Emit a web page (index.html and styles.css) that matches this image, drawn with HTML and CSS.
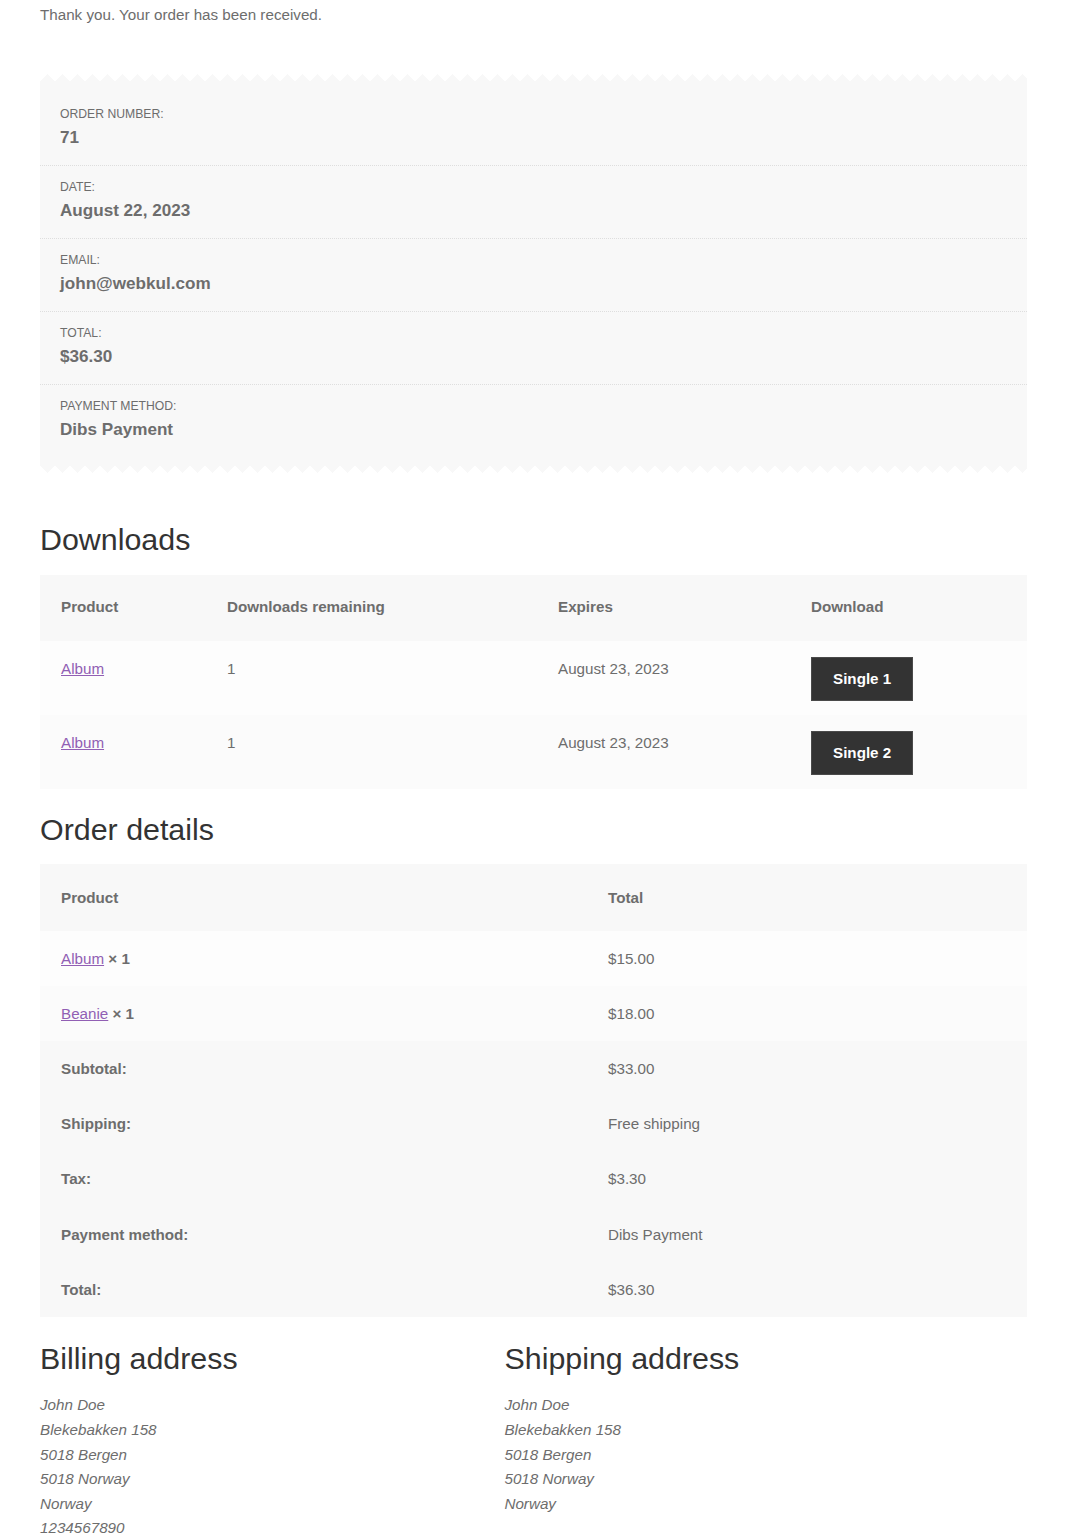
FILE: index.html
```html
<!DOCTYPE html>
<html lang="en">
<head>
<meta charset="utf-8">
<title>Order received</title>
<link rel="stylesheet" href="styles.css">
</head>
<body>
<div class="page">
  <p class="thankyou">Thank you. Your order has been received.</p>

  <div class="overview">
    <div class="zig zig-top"></div>
    <ul class="ov-body">
      <li class="ov-row"><span class="ov-label">Order number:</span><strong class="ov-value">71</strong></li>
      <li class="ov-row"><span class="ov-label">Date:</span><strong class="ov-value">August 22, 2023</strong></li>
      <li class="ov-row"><span class="ov-label">Email:</span><strong class="ov-value">john@webkul.com</strong></li>
      <li class="ov-row"><span class="ov-label">Total:</span><strong class="ov-value">$36.30</strong></li>
      <li class="ov-row"><span class="ov-label">Payment method:</span><strong class="ov-value">Dibs Payment</strong></li>
    </ul>
    <div class="zig zig-bottom"></div>
  </div>

  <section class="downloads">
    <h2 class="sec-title">Downloads</h2>
    <table class="shop-table dl-table">
      <colgroup>
        <col class="c-prod"><col class="c-rem"><col class="c-exp"><col class="c-dl">
      </colgroup>
      <thead>
        <tr><th>Product</th><th>Downloads remaining</th><th>Expires</th><th>Download</th></tr>
      </thead>
      <tbody>
        <tr>
          <td><a href="#">Album</a></td>
          <td>1</td>
          <td>August 23, 2023</td>
          <td><a class="button" href="#">Single 1</a></td>
        </tr>
        <tr>
          <td><a href="#">Album</a></td>
          <td>1</td>
          <td>August 23, 2023</td>
          <td><a class="button" href="#">Single 2</a></td>
        </tr>
      </tbody>
    </table>
  </section>

  <section class="order-details">
    <h2 class="sec-title">Order details</h2>
    <table class="shop-table od-table">
      <colgroup><col class="c-name"><col class="c-total"></colgroup>
      <thead>
        <tr><th>Product</th><th>Total</th></tr>
      </thead>
      <tbody>
        <tr><td><a href="#">Album</a> <strong class="qty">× 1</strong></td><td>$15.00</td></tr>
        <tr><td><a href="#">Beanie</a> <strong class="qty">× 1</strong></td><td>$18.00</td></tr>
      </tbody>
      <tfoot>
        <tr><th>Subtotal:</th><td>$33.00</td></tr>
        <tr><th>Shipping:</th><td>Free shipping</td></tr>
        <tr><th>Tax:</th><td>$3.30</td></tr>
        <tr><th>Payment method:</th><td>Dibs Payment</td></tr>
        <tr><th>Total:</th><td>$36.30</td></tr>
      </tfoot>
    </table>
  </section>

  <section class="addresses">
    <div class="col col-1">
      <h2 class="sec-title">Billing address</h2>
      <address>John Doe<br>Blekebakken 158<br>5018 Bergen<br>5018 Norway<br>Norway<br>1234567890</address>
    </div>
    <div class="col col-2">
      <h2 class="sec-title">Shipping address</h2>
      <address>John Doe<br>Blekebakken 158<br>5018 Bergen<br>5018 Norway<br>Norway</address>
    </div>
  </section>
</div>
</body>
</html>
```

FILE: styles.css
```css
* { box-sizing: border-box; }

html, body {
  margin: 0;
  padding: 0;
  background: #ffffff;
}

body {
  font-family: "Liberation Sans", Arial, Helvetica, sans-serif;
  font-size: 15.2px;
  line-height: 22px;
  color: #6d6d6d;
}

.page {
  padding: 4px 40px 0 40px;
}

.thankyou {
  margin: 0;
  line-height: 22px;
}

a {
  color: #915fb4;
  text-decoration: underline;
}

/* Overview box */
.overview {
  margin-top: 48px;
}

.zig {
  height: 8px;
  background-repeat: repeat-x;
  background-size: 15px 8px;
}

.zig-top {
  background-image: conic-gradient(from 135deg at 50% 0, #f8f8f8 90deg, transparent 0);
  background-position: 0 0;
}

.zig-bottom {
  background-image: conic-gradient(from -45deg at 50% 100%, #f8f8f8 90deg, transparent 0);
  background-position: 0 0;
}

.ov-body {
  list-style: none;
  margin: 0;
  padding: 10px 0 8px 0;
  background: #f8f8f8;
}

.ov-row {
  display: flex;
  flex-direction: column;
  padding: 14px 20px 15px 20px;
}

.ov-row + .ov-row {
  border-top: 1px dotted #dedede;
  padding-top: 13px;
}

.ov-label {
  font-size: 12.2px;
  line-height: 16px;
  text-transform: uppercase;
  color: #6d6d6d;
}

.ov-value {
  margin-top: 4px;
  font-size: 17.1px;
  line-height: 24px;
  font-weight: bold;
  color: #6d6d6d;
}

/* Section titles */
.sec-title {
  margin: 0 0 17px 0;
  font-size: 30.4px;
  line-height: 36px;
  font-weight: normal;
  color: #333333;
}

.downloads {
  margin-top: 48px;
}

.downloads .sec-title {
  margin-bottom: 18px;
}

.order-details .sec-title {
  margin-bottom: 17px;
}

/* Tables */
.shop-table {
  width: 100%;
  border-collapse: collapse;
  border-spacing: 0;
  table-layout: fixed;
  margin: 0 0 23px 0;
}

.shop-table th,
.shop-table td {
  text-align: left;
  padding: 17px 21px 16px 21px;
  vertical-align: top;
  line-height: 22px;
}

.shop-table thead th {
  background: #f8f8f8;
  font-weight: bold;
  padding-top: 21px;
  padding-bottom: 23px;
}

.shop-table tbody td {
  background: #fdfdfd;
}

.shop-table tbody tr:nth-child(2n) td {
  background: #fbfbfb;
}

.shop-table tfoot th,
.shop-table tfoot td {
  background: #f8f8f8;
  padding-top: 16.8px;
  padding-bottom: 16.5px;
}

.shop-table tfoot th {
  font-weight: bold;
}

.dl-table {
  margin-bottom: 22px;
}

.dl-table .c-prod { width: 166px; }
.dl-table .c-rem { width: 331px; }
.dl-table .c-exp { width: 253px; }
.dl-table .c-dl { width: 237px; }

.dl-table tbody td {
  padding-top: 17px;
  padding-bottom: 13px;
}

.dl-table tbody td:last-child {
  padding-top: 16px;
  padding-bottom: 14px;
}

.od-table .c-name { width: 547px; }
.od-table .c-total { width: 440px; }

.od-table thead th {
  padding-top: 23px;
  padding-bottom: 22px;
}

.qty {
  font-weight: bold;
}

.button {
  display: inline-block;
  vertical-align: top;
  background: #333333;
  border: 1px solid #4a4a4a;
  color: #ffffff;
  font-weight: bold;
  text-decoration: none;
  padding: 10px 21px;
  line-height: 22px;
}

/* Addresses */
.addresses {
  display: flex;
  align-items: flex-start;
}

.col-1 {
  width: 41.17647%;
  margin-right: 5.88235%;
}

.col-2 {
  width: 41.17647%;
}

address {
  font-style: italic;
  line-height: 24.6px;
  margin: 0;
}
```
